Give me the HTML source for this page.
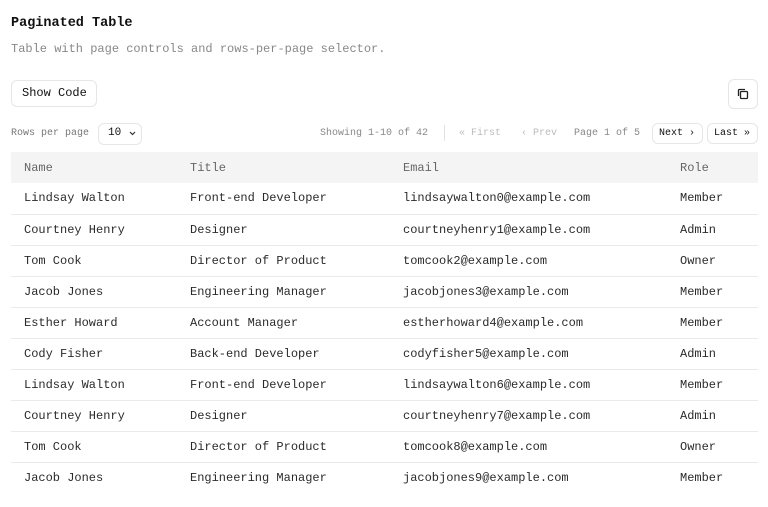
<!DOCTYPE html>
<html><head><style>
*{margin:0;padding:0;box-sizing:border-box}
body{width:768px;height:507px;background:#fff;font-family:"Liberation Mono",monospace;color:#222;position:relative;overflow:hidden}
.a{position:absolute;white-space:nowrap}
.btn{position:absolute;border:1px solid #e6e6e6;border-radius:6px;background:#fff}
table{position:absolute;left:11px;top:152px;width:747px;border-collapse:collapse;font-size:12px}
th{background:#f4f4f4;color:#666;font-weight:normal;text-align:left;height:31px;font-size:12px}
td{height:31px;border-bottom:1px solid #eaeaea;color:#2a2a2a}
tr:last-child td{border-bottom:none}
td:first-child,th:first-child{padding-left:13px}
.c1{width:179px}.c2{width:213px}.c3{width:277px}
</style></head><body>
<div class="a" style="left:11px;top:16px;font-size:13.5px;font-weight:bold;color:#111">Paginated Table</div>
<div class="a" style="left:11px;top:42px;font-size:12px;color:#888">Table with page controls and rows-per-page selector.</div>
<div class="btn" style="left:11px;top:80px;width:86px;height:27px"></div>
<div class="a" style="left:22px;top:86px;font-size:12px;color:#111">Show Code</div>
<div class="btn" style="left:728px;top:79px;width:30px;height:30px"></div>
<svg class="a" style="left:736px;top:87px" width="14" height="14" viewBox="0 0 14 14" fill="none" stroke="#222" stroke-width="1.3"><rect x="4.5" y="4.5" width="7" height="7" rx="1"/><path d="M2.5 9V3.5a1 1 0 0 1 1-1H9"/></svg>
<div class="a" style="left:11px;top:128px;font-size:10px;color:#777">Rows per page</div>
<div class="btn" style="left:98px;top:123px;width:44px;height:22px"></div>
<div class="a" style="left:108px;top:127px;font-size:11px;color:#111">10</div>
<svg class="a" style="left:129px;top:131px" width="7" height="5" viewBox="0 0 7 5" fill="none" stroke="#333" stroke-width="1.2"><path d="M1 1l2.5 2.5L6 1"/></svg>
<div class="a" style="left:320px;top:128px;font-size:10px;color:#888">Showing 1-10 of 42</div>
<div class="a" style="left:444px;top:125px;width:1px;height:16px;background:#e2e2e2"></div>
<div class="a" style="left:459px;top:128px;font-size:10px;color:#bbb">« First</div>
<div class="a" style="left:521px;top:128px;font-size:10px;color:#bbb">‹ Prev</div>
<div class="a" style="left:574px;top:128px;font-size:10px;color:#888">Page 1 of 5</div>
<div class="btn" style="left:652px;top:123px;width:51px;height:21px"></div>
<div class="a" style="left:659px;top:128px;font-size:10px;color:#111">Next ›</div>
<div class="btn" style="left:707px;top:123px;width:51px;height:21px"></div>
<div class="a" style="left:714px;top:128px;font-size:10px;color:#111">Last »</div>
<table>
<tr><th class="c1">Name</th><th class="c2">Title</th><th class="c3">Email</th><th>Role</th></tr>
<tr><td>Lindsay Walton</td><td>Front-end Developer</td><td>lindsaywalton0@example.com</td><td>Member</td></tr>
<tr><td>Courtney Henry</td><td>Designer</td><td>courtneyhenry1@example.com</td><td>Admin</td></tr>
<tr><td>Tom Cook</td><td>Director of Product</td><td>tomcook2@example.com</td><td>Owner</td></tr>
<tr><td>Jacob Jones</td><td>Engineering Manager</td><td>jacobjones3@example.com</td><td>Member</td></tr>
<tr><td>Esther Howard</td><td>Account Manager</td><td>estherhoward4@example.com</td><td>Member</td></tr>
<tr><td>Cody Fisher</td><td>Back-end Developer</td><td>codyfisher5@example.com</td><td>Admin</td></tr>
<tr><td>Lindsay Walton</td><td>Front-end Developer</td><td>lindsaywalton6@example.com</td><td>Member</td></tr>
<tr><td>Courtney Henry</td><td>Designer</td><td>courtneyhenry7@example.com</td><td>Admin</td></tr>
<tr><td>Tom Cook</td><td>Director of Product</td><td>tomcook8@example.com</td><td>Owner</td></tr>
<tr><td>Jacob Jones</td><td>Engineering Manager</td><td>jacobjones9@example.com</td><td>Member</td></tr>
</table>
</body></html>
